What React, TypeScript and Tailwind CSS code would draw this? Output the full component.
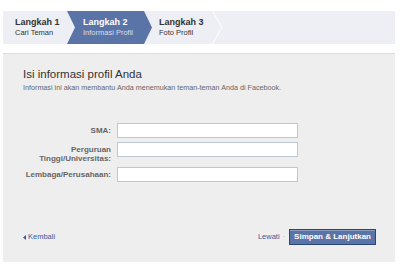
export default function App() {
  return (
    <div className="w-[400px] h-[268px] bg-white pt-[11px] pl-[3px] pr-[5px] font-['Liberation_Sans',Arial,sans-serif]">
      <div className="flex h-[33px] bg-[#edeff4]">
        <div className="w-[64px] pl-[12px] flex flex-col justify-center">
          <div className="text-[9px] leading-[11px] font-bold text-[#333333] whitespace-nowrap">Langkah 1</div>
          <div className="text-[7.5px] leading-[10px] text-[#333333] whitespace-nowrap">Cari Teman</div>
        </div>
        <div className="w-[85px] bg-[#5b74a8] [clip-path:polygon(0_0,77px_0,85px_50%,77px_100%,0_100%,8px_50%)] pl-[16px] flex flex-col justify-center">
          <div className="text-[9px] leading-[11px] font-bold text-white whitespace-nowrap">Langkah 2</div>
          <div className="text-[7.5px] leading-[10px] text-[#d8dfea] whitespace-nowrap">Informasi Profil</div>
        </div>
        <div className="w-[71px] relative pl-[7px] flex flex-col justify-center">
          <div className="text-[9px] leading-[11px] font-bold text-[#333333] whitespace-nowrap">Langkah 3</div>
          <div className="text-[7.5px] leading-[10px] text-[#333333] whitespace-nowrap">Foto Profil</div>
          <svg className="absolute right-0 top-0" width="11" height="33" viewBox="0 0 11 33">
            <polyline points="0.5,0 10,16.5 0.5,33" stroke="#ffffff" strokeWidth="1" fill="none" />
          </svg>
        </div>
      </div>
      <div className="mt-[9px] h-[209px] bg-[#eeeeee] border-t border-[#dddddd] flex flex-col">
        <div className="pl-[20px] pt-[14px]">
          <div className="text-[11.5px] leading-[13px] text-[#333333]">Isi informasi profil Anda</div>
          <div className="text-[7.2px] leading-[10px] text-[#666666] mt-[2px] whitespace-nowrap">
            Informasi ini akan membantu Anda menemukan teman-teman Anda di Facebook.
          </div>
        </div>
        <div className="mt-[30px] flex flex-col gap-[4px]">
          <div className="flex items-start">
            <div className="w-[108px] text-right text-[8px] leading-[9px] font-bold text-[#666666] pt-[3px]">SMA:</div>
            <div className="ml-[6px] w-[181px] h-[15px] border border-[#bdc7d8] bg-white"></div>
          </div>
          <div className="flex items-start">
            <div className="w-[108px] text-right text-[8px] leading-[9px] font-bold text-[#666666] pt-[3px]">
              Perguruan
              <br />
              Tinggi/Universitas:
            </div>
            <div className="ml-[6px] w-[181px] h-[15px] border border-[#bdc7d8] bg-white"></div>
          </div>
          <div className="flex items-start">
            <div className="w-[108px] text-right text-[8px] leading-[9px] font-bold text-[#666666] pt-[3px]">Lembaga/Perusahaan:</div>
            <div className="ml-[6px] w-[181px] h-[15px] border border-[#bdc7d8] bg-white"></div>
          </div>
        </div>
        <div className="mt-auto mb-[17px] flex items-center pl-[20px] pr-[19px]">
          <div className="flex items-center text-[7.5px] text-[#3b5998]">
            <svg width="4" height="5" viewBox="0 0 4 5" className="mr-[1px]">
              <polygon points="3,0 0,2.5 3,5" fill="#3b5998" />
            </svg>
            <span>Kembali</span>
          </div>
          <div className="ml-auto flex items-center">
            <span className="text-[7.5px] text-[#3b5998]">Lewati</span>
            <span className="text-[7.5px] text-[#999999] mx-[3px]">·</span>
            <div className="ml-[1px] h-[16px] border border-[#29447e] bg-[#5b74a8] shadow-[inset_0_1px_0_#8a9cc2] px-[4px] flex items-center text-[8px] font-bold text-white whitespace-nowrap">
              Simpan &amp; Lanjutkan
            </div>
          </div>
        </div>
      </div>
    </div>
  );
}
